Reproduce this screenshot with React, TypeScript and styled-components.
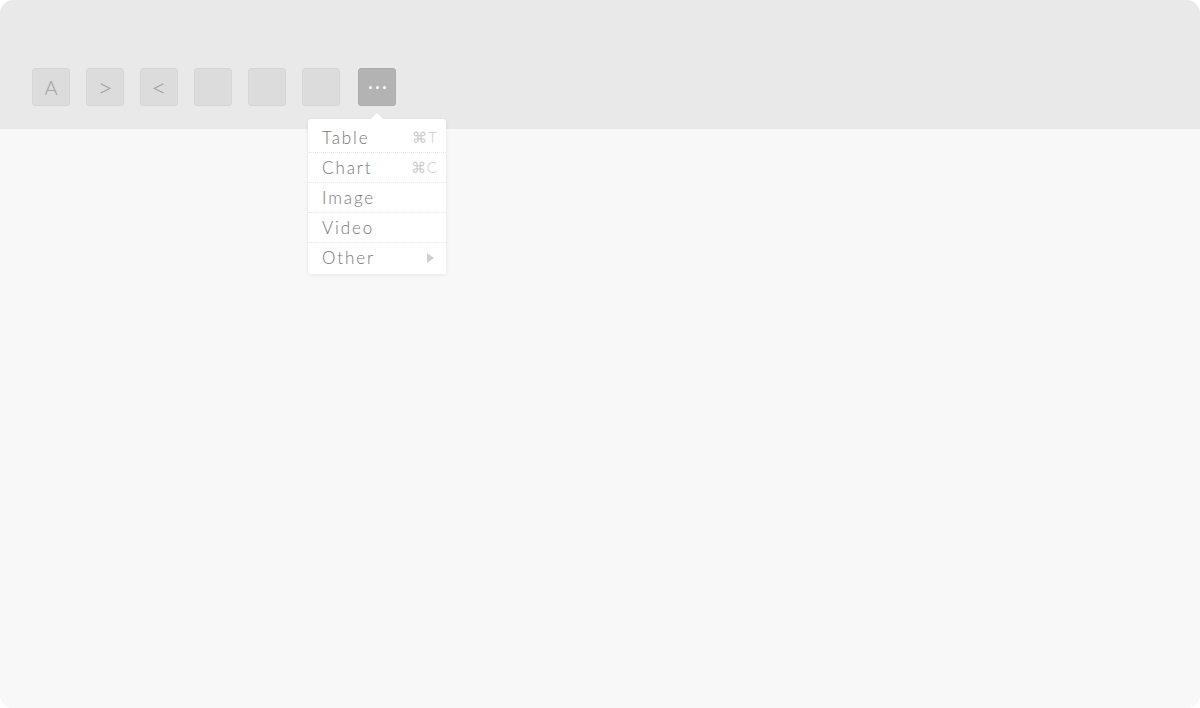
import styled, { createGlobalStyle } from 'styled-components';

const GlobalStyle = createGlobalStyle`
  html, body {
    margin: 0;
    padding: 0;
    background: #ffffff;
    font-family: Lato, "Open Sans", sans-serif;
  }
`;

const tools = [
  { label: 'A', size: 20 },
  { label: '>', size: 26 },
  { label: '<', size: 26 },
  { label: '' },
  { label: '' },
  { label: '' },
];

const items = [
  { label: 'Table', shortcut: '⌘T' },
  { label: 'Chart', shortcut: '⌘C' },
  { label: 'Image' },
  { label: 'Video' },
  { label: 'Other', submenu: true },
];

const App = () => {
  return (
    <>
      <GlobalStyle />
      <Frame>
        <Header>
          <Toolbar>
            {tools.map((t, i) => (
              <ToolButton key={i} $size={t.size}>
                {t.label}
              </ToolButton>
            ))}
            <MoreWrap>
              <ToolButton $active>
                <Dots>
                  <span />
                  <span />
                  <span />
                </Dots>
              </ToolButton>
              <Menu>
                {items.map((item) => (
                  <MenuItem key={item.label}>
                    <span>{item.label}</span>
                    {item.shortcut && <Shortcut>{item.shortcut}</Shortcut>}
                    {item.submenu && <SubArrow />}
                  </MenuItem>
                ))}
              </Menu>
            </MoreWrap>
          </Toolbar>
        </Header>
        <Body />
      </Frame>
    </>
  );
};

export default App;

const Frame = styled.div`
  width: 1200px;
  height: 708px;
  border-radius: 14px;
  overflow: hidden;
  display: flex;
  flex-direction: column;
  background: #f8f8f8;
`;

const Header = styled.div`
  height: 129px;
  background: #e9e9e9;
  display: flex;
  align-items: flex-start;
  padding: 68px 0 0 32px;
  box-sizing: border-box;
  position: relative;
  z-index: 1;
`;

const Toolbar = styled.div`
  display: flex;
  gap: 16px;
`;

const ToolButton = styled.div<{ $active?: boolean; $size?: number }>`
  width: 38px;
  height: 38px;
  box-sizing: border-box;
  border-radius: 3px;
  background: ${({ $active }) => ($active ? '#b3b3b3' : '#dcdcdc')};
  border: 1px solid ${({ $active }) => ($active ? '#adadad' : '#d6d6d6')};
  display: flex;
  align-items: center;
  justify-content: center;
  color: #a0a0a0;
  font-size: ${({ $size }) => $size ?? 19}px;
  font-weight: 300;
  line-height: 1;
`;

const Dots = styled.div`
  display: flex;
  gap: 4px;

  span {
    width: 3px;
    height: 3px;
    border-radius: 50%;
    background: #ffffff;
  }
`;

const MoreWrap = styled.div`
  position: relative;
  margin-left: 2px;
`;

const Menu = styled.div`
  position: absolute;
  top: 51px;
  left: -50px;
  width: 138px;
  background: #ffffff;
  border-radius: 3px;
  box-shadow: 0 1px 4px rgba(0, 0, 0, 0.08);
  padding: 4px 0 2px;

  &::before {
    content: '';
    position: absolute;
    top: -6px;
    left: 63px;
    border-left: 6px solid transparent;
    border-right: 6px solid transparent;
    border-bottom: 6px solid #ffffff;
  }
`;

const MenuItem = styled.div`
  display: flex;
  align-items: center;
  justify-content: space-between;
  height: 29px;
  padding: 0 8px 0 14px;
  border-bottom: 1px dotted #e6e6e6;
  font-size: 17px;
  font-weight: 300;
  letter-spacing: 1.9px;
  color: #757575;

  &:last-child {
    border-bottom: none;
  }
`;

const Shortcut = styled.span`
  color: #cccccc;
  font-size: 15px;
  letter-spacing: 1px;
`;

const SubArrow = styled.span`
  width: 0;
  height: 0;
  margin-right: 4px;
  border-top: 5px solid transparent;
  border-bottom: 5px solid transparent;
  border-left: 7px solid #d0d0d0;
`;

const Body = styled.div`
  flex: 1;
  background: #f8f8f8;
`;
